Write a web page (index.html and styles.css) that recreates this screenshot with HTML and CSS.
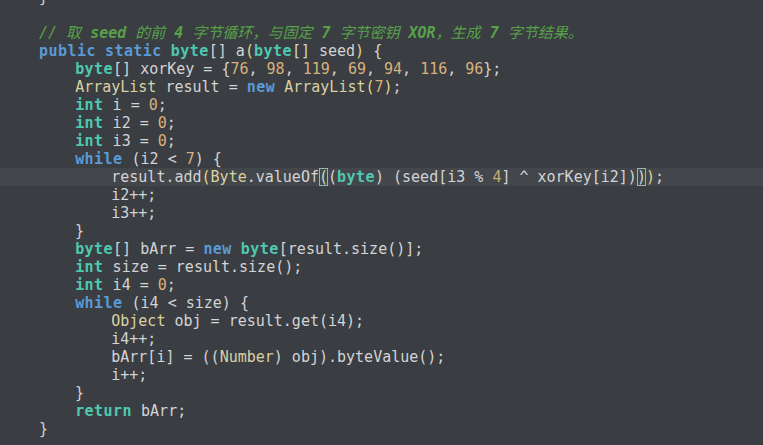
FILE: index.html
```html
<!DOCTYPE html>
<html lang="zh">
<head>
<meta charset="utf-8">
<title>code</title>
<link rel="stylesheet" href="styles.css">
</head>
<body>
<div class="editor">
<div class="line"><span class="p">}</span></div>
<div class="line"> </div>
<div class="line"><span class="cm">// 取 <b>seed</b> 的前 <b>4</b> 字节循环，与固定 <b>7</b> 字节密钥 <b>XOR</b>，生成 <b>7</b> 字节结果。</span></div>
<div class="line"><span class="kb">public</span> <span class="kb">static</span> <span class="kt">byte</span>[] a<span class="br">(</span><span class="kt">byte</span>[] seed<span class="br">)</span> {</div>
<div class="line">    <span class="kt">byte</span>[] xorKey = {<span class="n">76</span>, <span class="n">98</span>, <span class="n">119</span>, <span class="n">69</span>, <span class="n">94</span>, <span class="n">116</span>, <span class="n">96</span>};</div>
<div class="line">    <span class="c">ArrayList</span> result = <span class="kb">new</span> <span class="c">ArrayList</span><span class="br">(</span><span class="n">7</span><span class="br">)</span>;</div>
<div class="line">    <span class="kt">int</span> i = <span class="n">0</span>;</div>
<div class="line">    <span class="kt">int</span> i2 = <span class="n">0</span>;</div>
<div class="line">    <span class="kt">int</span> i3 = <span class="n">0</span>;</div>
<div class="line">    <span class="kb">while</span> (i2 &lt; <span class="n">7</span>) {</div>
<div class="line cur">        result.add<span class="br">(</span><span class="c">Byte</span>.valueOf<span class="match">(</span>(<span class="kt">byte</span>) (seed[i3 % <span class="n n2">4</span>] ^ xorKey[i2])<span class="match">)</span><span class="br">)</span>;</div>
<div class="line">        i2++;</div>
<div class="line">        i3++;</div>
<div class="line">    }</div>
<div class="line">    <span class="kt">byte</span>[] bArr = <span class="kb">new</span> <span class="kt">byte</span>[result.size()];</div>
<div class="line">    <span class="kt">int</span> size = result.size();</div>
<div class="line">    <span class="kt">int</span> i4 = <span class="n">0</span>;</div>
<div class="line">    <span class="kb">while</span> (i4 &lt; size) {</div>
<div class="line">        <span class="c">Object</span> obj = result.get(i4);</div>
<div class="line">        i4++;</div>
<div class="line">        bArr[i] = ((<span class="c">Number</span>) obj).byteValue();</div>
<div class="line">        i++;</div>
<div class="line">    }</div>
<div class="line">    <span class="kt">return</span> bArr;</div>
<div class="line">}</div>
</div>
</body>
</html>
```
FILE: styles.css
```css
html, body {
  margin: 0;
  padding: 0;
  background: #3a3d41;
  height: 100%;
  overflow: hidden;
}
.editor {
  margin-top: -12px;
  font-family: "DejaVu Sans Mono", "Noto Sans CJK SC", monospace;
  font-size: 15px;
  line-height: 18px;
  color: #d2d4d6;
}
.line {
  white-space: pre;
  padding-left: 39px;
  height: 18px;
}
.cur {
  background: #43464a;
}
.cm {
  color: #57a14a;
  font-style: italic;
}
.cm b {
  font-weight: bold;
}
.kb {
  color: #5a9ad6;
  font-weight: bold;
  letter-spacing: 0.45px;
}
.kt {
  color: #4ec9b0;
  font-weight: bold;
  letter-spacing: 0.45px;
}
.n {
  color: #d9b07c;
}
.n2 {
  color: #c2b070;
}
.c {
  color: #d8d3a2;
}
.br {
  color: #e2d38a;
}
.match {
  outline: 1px solid #9fb3ab;
  outline-offset: -1px;
  background: #3d4a47;
}
```
